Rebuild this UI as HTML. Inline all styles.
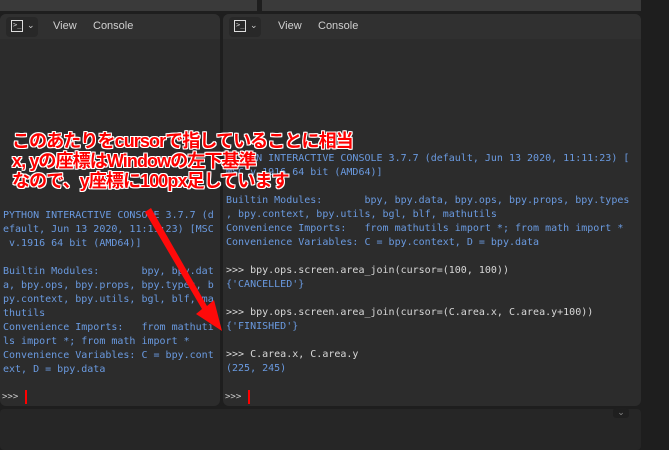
<!DOCTYPE html>
<html><head><meta charset="utf-8"><style>
*{margin:0;padding:0;box-sizing:border-box}
body{width:669px;height:450px;background:#1e1e1e;position:relative;overflow:hidden;font-family:"Liberation Sans",sans-serif}
.top{position:absolute;top:0;height:11px;background:#3a3a3a}
.panel{position:absolute;top:14px;height:392px;background:#2c2c2c;border-radius:6px;overflow:hidden}
.hdr{position:absolute;left:0;right:0;top:0;height:25px;background:#303030}
.ico{position:absolute;left:6px;top:3px;width:32px;height:20px;border-radius:4px;background:#282828}
.ico i{position:absolute;left:5px;top:3px;width:12px;height:12px;border:1px solid #ddd;font-style:normal;font-size:7px;color:#ddd;line-height:8px;padding-left:1px;font-family:"DejaVu Sans Mono",monospace}
.menu{position:absolute;top:6px;font-size:11px;color:#d0d0d0}
pre{position:absolute;left:3px;font-family:"DejaVu Sans Mono",monospace;font-size:10px;line-height:14px;color:#6a9ae0;white-space:pre}
.in{color:#d8d8d8}
.pr{position:absolute;left:2px;top:378px;font-size:9px;color:#ccc;font-family:"DejaVu Sans Mono",monospace}
.cur{position:absolute;left:25px;top:376px;width:2px;height:14px;background:#f00}
.ann{position:absolute;left:12px;top:131px;font-family:"Liberation Sans","Noto Sans CJK JP",sans-serif;font-weight:bold;font-size:18px;line-height:20px;color:#f00;letter-spacing:-0.9px;text-shadow:1px 1px 0 #fff,-1px -1px 0 #fff,1px -1px 0 #fff,-1px 1px 0 #fff,0 1px 0 #fff,0 -1px 0 #fff,1px 0 0 #fff,-1px 0 0 #fff;white-space:nowrap}
</style></head><body>
<div class="top" style="left:0;width:257px"></div>
<div class="top" style="left:262px;width:379px"></div>
<div class="panel" style="left:0;width:220px">
 <div class="hdr"><div class="ico"><i>&gt;_</i><span style="position:absolute;left:21px;top:3px;color:#ccc;font-size:9px">⌄</span></div>
 <div class="menu" style="left:53px">View</div><div class="menu" style="left:93px">Console</div></div>
 <pre style="top:195px">PYTHON INTERACTIVE CONSOLE 3.7.7 (d
efault, Jun 13 2020, 11:11:23) [MSC
 v.1916 64 bit (AMD64)]

Builtin Modules:       bpy, bpy.dat
a, bpy.ops, bpy.props, bpy.types, b
py.context, bpy.utils, bgl, blf, ma
thutils
Convenience Imports:   from mathuti
ls import *; from math import *
Convenience Variables: C = bpy.cont
ext, D = bpy.data</pre>
 <div class="pr">&gt;&gt;&gt;</div><div class="cur"></div>
</div>
<div class="panel" style="left:223px;width:418px">
 <div class="hdr"><div class="ico"><i>&gt;_</i><span style="position:absolute;left:21px;top:3px;color:#ccc;font-size:9px">⌄</span></div>
 <div class="menu" style="left:55px">View</div><div class="menu" style="left:95px">Console</div></div>
 <pre style="top:138px">PYTHON INTERACTIVE CONSOLE 3.7.7 (default, Jun 13 2020, 11:11:23) [
MSC v.1916 64 bit (AMD64)]

Builtin Modules:       bpy, bpy.data, bpy.ops, bpy.props, bpy.types
, bpy.context, bpy.utils, bgl, blf, mathutils
Convenience Imports:   from mathutils import *; from math import *
Convenience Variables: C = bpy.context, D = bpy.data

<span class="in">&gt;&gt;&gt; bpy.ops.screen.area_join(cursor=(100, 100))</span>
{'CANCELLED'}

<span class="in">&gt;&gt;&gt; bpy.ops.screen.area_join(cursor=(C.area.x, C.area.y+100))</span>
{'FINISHED'}

<span class="in">&gt;&gt;&gt; C.area.x, C.area.y</span>
(225, 245)</pre>
 <div class="pr">&gt;&gt;&gt;</div><div class="cur"></div>
</div>
<div style="position:absolute;left:0;top:409px;width:641px;height:41px;background:#262626;border-radius:4px"></div>
<div style="position:absolute;left:613px;top:408px;width:16px;height:10px;background:#1f1f1f;border-radius:3px;color:#888;font-size:9px;text-align:center;line-height:8px">⌄</div>
<svg style="position:absolute;left:0;top:0" width="669" height="450">
 <polygon points="145,212 151,208 207,306 214,300 222,331 196,314 202,309" fill="#ff0a0a"/>
</svg>
<div class="ann">このあたりをcursorで指していることに相当<br>x, yの座標はWindowの左下基準<br>なので、y座標に100px足しています</div>
</body></html>
